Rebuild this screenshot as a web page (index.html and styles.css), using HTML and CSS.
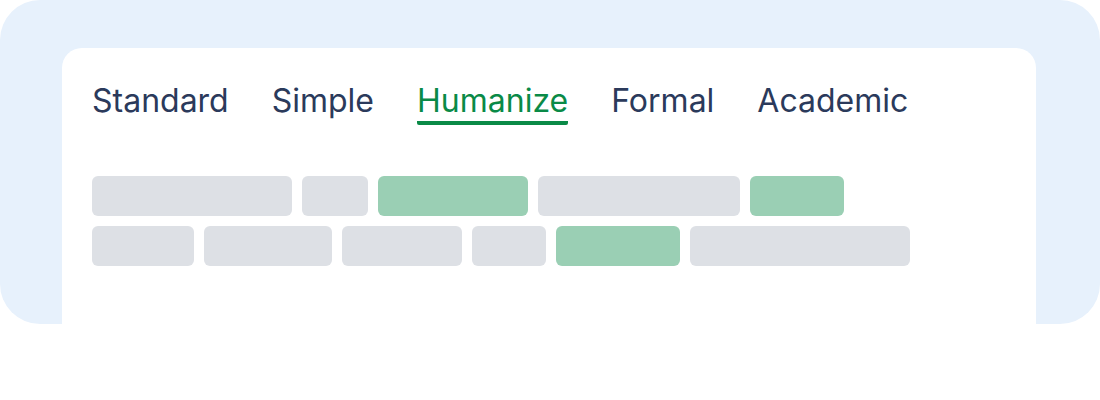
FILE: index.html
```html
<!DOCTYPE html>
<html lang="en">

<head>
    <meta charset="UTF-8">
    <meta name="viewport" content="width=device-width, initial-scale=1.0">
    <title>Rewrite Modes</title>

    <link rel="stylesheet" href="styles.css">
</head>

<body>
    <div class="frame">
        <div class="card">
            <div class="tabs">
                <span class="tab">Standard</span>
                <span class="tab">Simple</span>
                <span class="tab active">Humanize</span>
                <span class="tab">Formal</span>
                <span class="tab">Academic</span>
            </div>

            <div class="lines">
                <div class="line">
                    <span class="bar w200"></span>
                    <span class="bar w66"></span>
                    <span class="bar green w150"></span>
                    <span class="bar w202"></span>
                    <span class="bar green w94"></span>
                </div>
                <div class="line">
                    <span class="bar w102"></span>
                    <span class="bar w128"></span>
                    <span class="bar w120"></span>
                    <span class="bar w74"></span>
                    <span class="bar green w124"></span>
                    <span class="bar w220"></span>
                </div>
            </div>
        </div>
    </div>
</body>

</html>
```

FILE: styles.css
```css
body {
    margin: 0;
    background-color: #fff;
    font-family: Inter, "Noto Sans", sans-serif;
}

.frame {
    background-color: #e7f1fc;
    border-radius: 40px;
    height: 324px;
    padding: 48px 64px 0 62px;
    box-sizing: border-box;
    overflow: hidden;
}

.card {
    background-color: #fff;
    border-radius: 20px 20px 0 0;
    height: 100%;
    padding: 0 30px;
}

.tabs {
    display: flex;
    gap: 43px;
    padding-top: 33px;
}

.tab {
    font-size: 32px;
    line-height: 40px;
    color: #2b3a5b;
    border-bottom: 4px solid transparent;
}

.tab.active {
    color: #0a8a47;
    border-bottom-color: #0a8a47;
    border-radius: 2px;
}

.lines {
    margin-top: 51px;
    display: flex;
    flex-direction: column;
    gap: 10px;
}

.line {
    display: flex;
    gap: 10px;
}

.bar {
    height: 40px;
    border-radius: 6px;
    background-color: #dde0e5;
}

.bar.green {
    background-color: #9acfb4;
}

.w66 { width: 66px; }
.w74 { width: 74px; }
.w94 { width: 94px; }
.w102 { width: 102px; }
.w120 { width: 120px; }
.w124 { width: 124px; }
.w128 { width: 128px; }
.w150 { width: 150px; }
.w200 { width: 200px; }
.w202 { width: 202px; }
.w220 { width: 220px; }
```
